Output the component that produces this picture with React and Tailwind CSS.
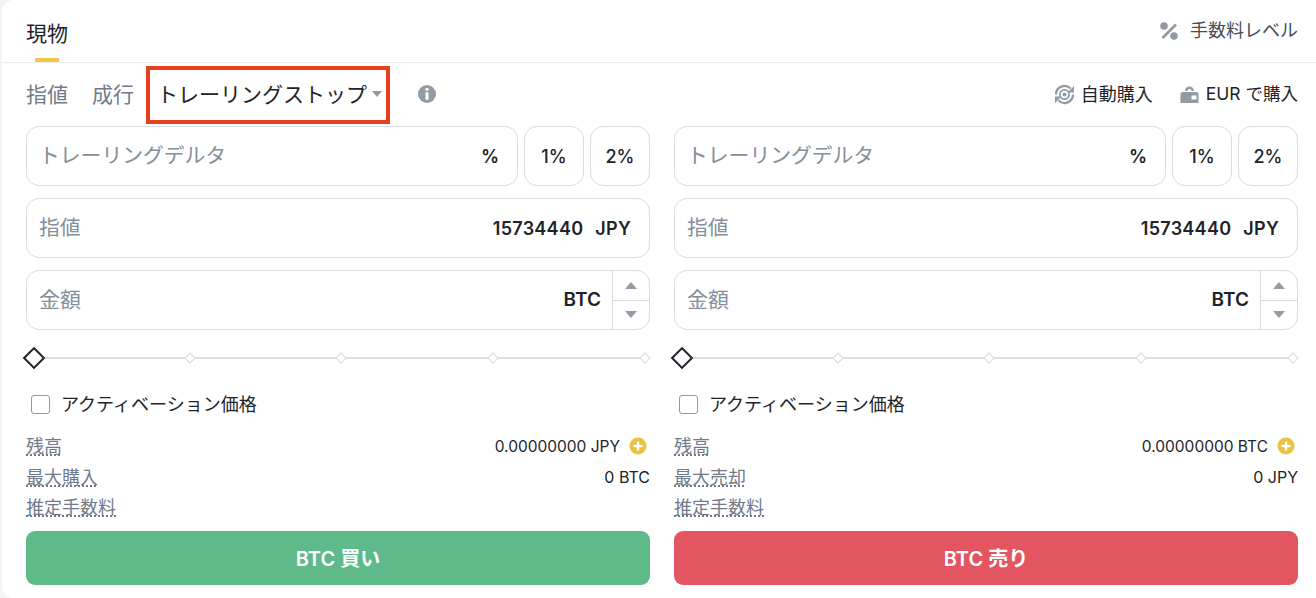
import React from 'react';

const FONT = "font-['Inter','Noto_Sans_CJK_JP',sans-serif]";

const Caret = ({ up }) => (
  <svg width="12" height="7" viewBox="0 0 12 7" className="block">
    <path d={up ? 'M6 0L12 7H0Z' : 'M0 0H12L6 7Z'} fill="#929aa5" />
  </svg>
);

const Slider = () => (
  <div className="relative h-6 mt-4 mb-[22px]">
    <div className="absolute left-2 right-0 top-[11px] h-[2px] bg-[#dcdfe4]" />
    <div className="absolute left-[160px] top-[8px] w-2 h-2 rotate-45 bg-white border border-[#d5d8dc]" />
    <div className="absolute left-[311px] top-[8px] w-2 h-2 rotate-45 bg-white border border-[#d5d8dc]" />
    <div className="absolute left-[463px] top-[8px] w-2 h-2 rotate-45 bg-white border border-[#d5d8dc]" />
    <div className="absolute left-[615px] top-[8px] w-2 h-2 rotate-45 bg-white border border-[#d5d8dc]" />
    <div className="absolute left-0 top-[4px] w-[16px] h-[16px] rotate-45 bg-white border-2 border-[#1e2329]" />
  </div>
);

const InputBox = ({ label, right }) => (
  <div className="flex-1 h-[60px] flex items-center justify-between pl-3 pr-[18px] border border-[#d8dbe0] rounded-[13px]">
    <span className="text-[20.8px] text-[#848e9c]">{label}</span>
    {right}
  </div>
);

const PctBtn = ({ children }) => (
  <div className="w-[60px] h-[60px] flex items-center justify-center border border-[#d8dbe0] rounded-[13px] text-[18px] font-medium text-[#1e2329]">
    {children}
  </div>
);

const Plus = () => (
  <svg width="18" height="18" viewBox="0 0 18 18" className="ml-[9px] mr-[3px] -mt-[2px]">
    <circle cx="9" cy="9" r="8.5" fill="#ecc142" />
    <path d="M9 4.5v9M4.5 9h9" stroke="#fff" strokeWidth="2.4" />
  </svg>
);

const OrderForm = ({ asset, quote, maxLabel, maxValue, balance, btnClass, btnText }) => (
  <div className="flex-1 min-w-0">
    <div className="flex gap-[6px]">
      <InputBox
        label="トレーリングデルタ"
        right={<span className="text-[18px] font-semibold text-[#1e2329]">%</span>}
      />
      <PctBtn>1%</PctBtn>
      <PctBtn>2%</PctBtn>
    </div>
    <div className="mt-3">
      <InputBox
        label="指値"
        right={<span className="text-[18px] font-semibold text-[#1e2329] tracking-[0.27px]">15734440<span className="ml-3">{quote}</span></span>}
      />
    </div>
    <div className="mt-3 h-[60px] flex items-center border border-[#d8dbe0] rounded-[13px]">
      <span className="pl-3 text-[21px] text-[#848e9c]">金額</span>
      <span className="ml-auto mr-[11px] text-[19px] font-semibold text-[#1e2329]">{asset}</span>
      <div className="w-[37px] h-full flex flex-col border-l border-[#d8dbe0]">
        <div className="flex-1 flex items-center justify-center border-b border-[#d8dbe0]"><Caret up /></div>
        <div className="flex-1 flex items-center justify-center"><Caret /></div>
      </div>
    </div>
    <Slider />
    <label className="flex items-center pl-[5px] h-[24px]">
      <span className="w-[19px] h-[19px] border border-[#929aa5] rounded-[3px]" />
      <span className="ml-[11px] text-[18px] text-[#1e2329]">アクティベーション価格</span>
    </label>
    <div className="mt-[15px] flex items-center justify-between h-[31px]">
      <span className="text-[18px] text-[#707a8a] underline decoration-dotted underline-offset-2">残高</span>
      <span className="flex items-center text-[15.5px] text-[#1e2329]">{balance}<Plus /></span>
    </div>
    <div className="flex items-center justify-between h-[30px]">
      <span className="text-[18px] text-[#707a8a] underline decoration-dotted underline-offset-2">{maxLabel}</span>
      <span className="text-[16px] text-[#1e2329]">{maxValue}</span>
    </div>
    <div className="flex items-center h-[30px]">
      <span className="text-[18px] text-[#707a8a] underline decoration-dotted underline-offset-2">推定手数料</span>
    </div>
    <button className={`mt-[9px] pt-[2px] w-full h-[54px] rounded-[9px] text-white text-[20px] font-semibold ${btnClass}`}>
      {btnText}
    </button>
  </div>
);

export default function App() {
  return (
    <div className={`w-[1316px] h-[598px] overflow-hidden bg-[#f3f4f5] pl-[2px] ${FONT}`}>
      <div className="h-[598px] bg-white rounded-tl-[12px] rounded-bl-[12px]">
        <div className="h-[63px] flex items-center justify-between pl-6 pr-[18px] border-b border-[#eaecef] relative">
          <span className="text-[21px] text-[#1e2329] mt-[6px]">現物</span>
          <div className="absolute left-[33px] bottom-0 w-6 h-1 bg-[#f0c94a]" />
          <div className="flex items-center gap-[12px] -mt-[1px]">
            <svg width="18" height="18" viewBox="0 0 18 18">
              <circle cx="4" cy="4" r="3.8" fill="#929aa5" />
              <circle cx="14" cy="14" r="3.8" fill="#929aa5" />
              <path d="M16 2.5L2.5 16" stroke="#929aa5" strokeWidth="2.6" />
            </svg>
            <span className="text-[18px] text-[#474d57]">手数料レベル</span>
          </div>
        </div>
        <div className="h-[63px] flex items-center pl-6 pr-[18px]">
          <span className="text-[21px] text-[#707a8a]">指値</span>
          <span className="ml-[24px] text-[21px] text-[#707a8a]">成行</span>
          <div className="ml-3 mt-[1px] w-[244px] h-[58px] border-4 border-[#e8401f] flex items-center pl-[7px]">
            <span className="text-[21px] text-[#1e2329] whitespace-nowrap">トレーリングストップ</span>
            <svg width="10" height="6" viewBox="0 0 10 6" className="ml-[5px] -mt-[3px] shrink-0">
              <path d="M0 0H10L5 6Z" fill="#929aa5" />
            </svg>
          </div>
          <svg width="18" height="18" viewBox="0 0 18 18" className="ml-[28px] -mt-[1px]">
            <circle cx="9" cy="9" r="9" fill="#929aa5" />
            <rect x="7.5" y="3" width="3" height="2.8" rx="0.5" fill="#fff" />
            <rect x="7.5" y="7.2" width="3" height="7.6" rx="0.5" fill="#fff" />
          </svg>
          <div className="ml-auto flex items-center">
            <svg width="21" height="21" viewBox="0 0 21 21">
              <circle cx="10.5" cy="10.5" r="2" fill="#929aa5" />
              <circle cx="10.5" cy="10.5" r="4.6" fill="none" stroke="#929aa5" strokeWidth="1.8" />
              <path d="M2 10.5a8.5 8.5 0 0 1 14.5-6" fill="none" stroke="#929aa5" strokeWidth="2.4" />
              <path d="M19 10.5a8.5 8.5 0 0 1-14.5 6" fill="none" stroke="#929aa5" strokeWidth="2.4" />
              <path d="M20 2v6.5h-6.5zM1 19v-6.5h6.5z" fill="#929aa5" />
            </svg>
            <span className="ml-[6px] text-[18px] text-[#1e2329]">自動購入</span>
            <svg width="19" height="19" viewBox="0 0 19 19" className="ml-[27px]">
              <path d="M5 6a4.5 4.5 0 0 1 9 0h-2.4a2.1 2.1 0 0 0-4.2 0z" fill="#929aa5" />
              <path d="M0.5 9a2 2 0 0 1 2-2h14a2 2 0 0 1 2 2v9h-18z" fill="#929aa5" />
              <rect x="11.5" y="10.5" width="5" height="4" fill="#fff" />
            </svg>
            <span className="ml-[7px] text-[17.5px] text-[#1e2329]">EUR で購入</span>
          </div>
        </div>
        <div className="flex gap-6 pl-6 pr-[18px]">
          <OrderForm asset="BTC" quote="JPY" balance="0.00000000 JPY" maxLabel="最大購入" maxValue="0 BTC" btnClass="bg-[#5eba89]" btnText="BTC 買い" />
          <OrderForm asset="BTC" quote="JPY" balance="0.00000000 BTC" maxLabel="最大売却" maxValue="0 JPY" btnClass="bg-[#e45562]" btnText="BTC 売り" />
        </div>
      </div>
    </div>
  );
}
